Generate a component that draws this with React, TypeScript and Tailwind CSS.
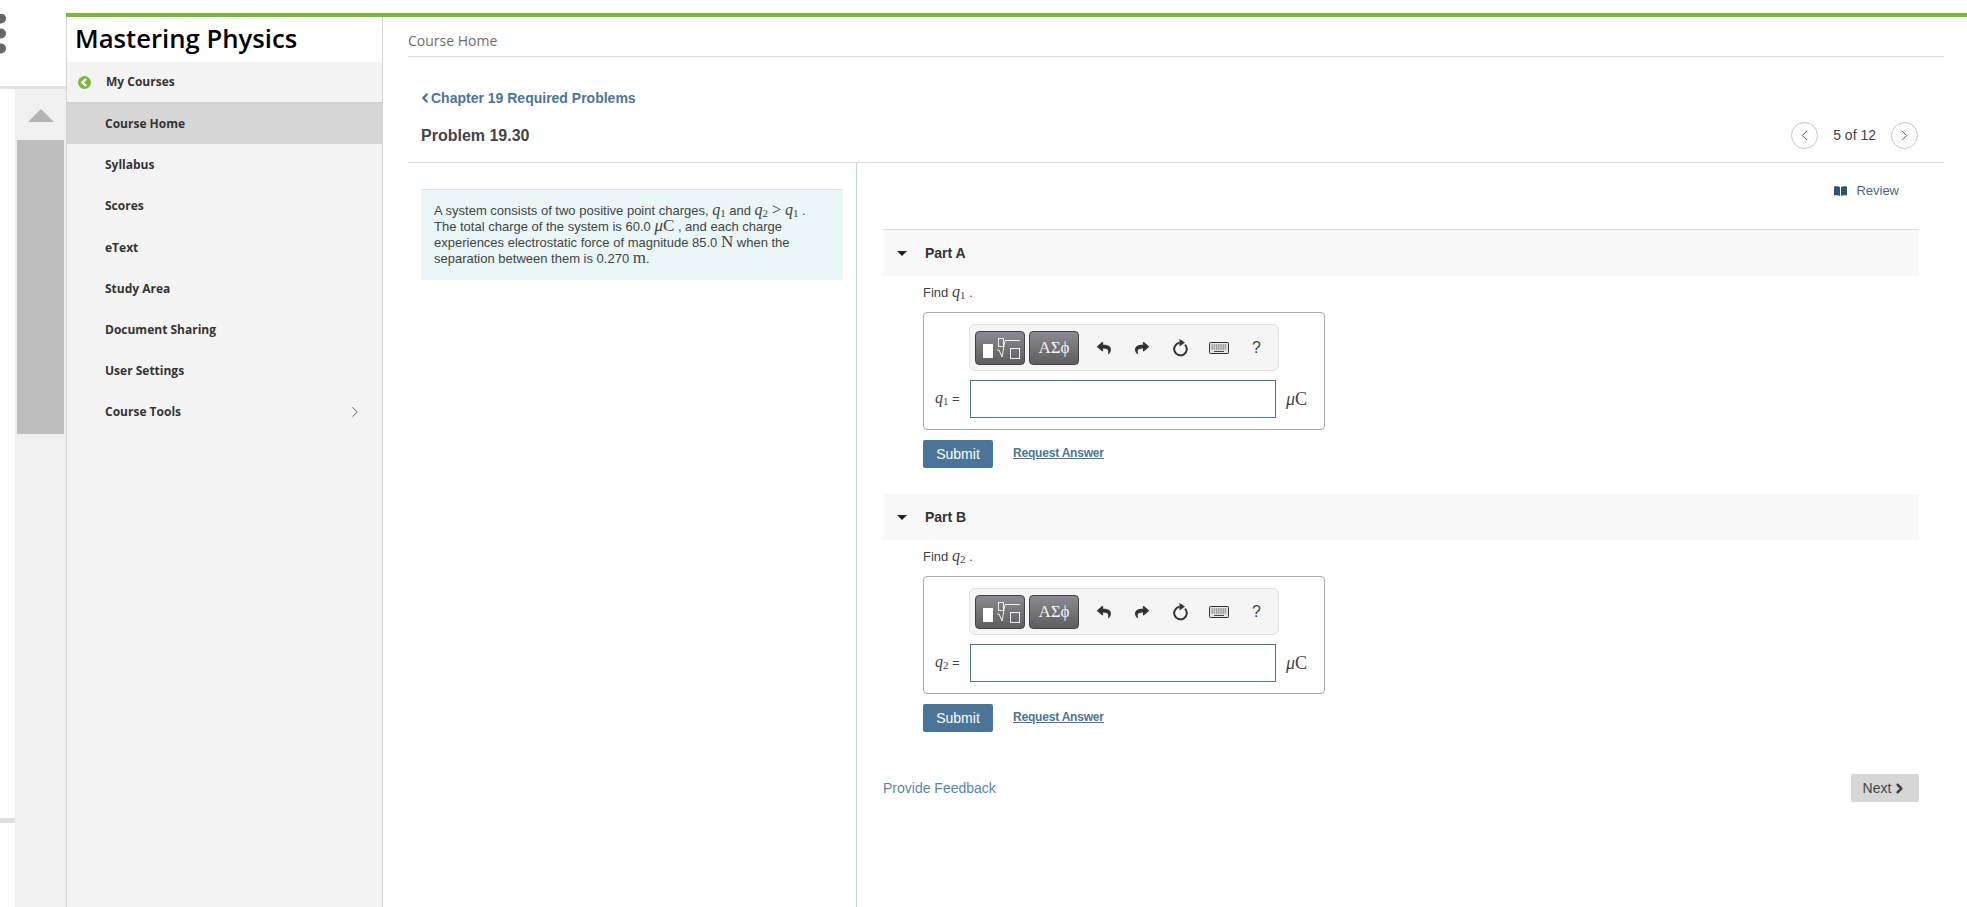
import React from 'react';
import { ChevronLeft, ChevronRight } from 'lucide-react';
import { FaReply, FaShare } from 'react-icons/fa';

const navItems = ['Course Home', 'Syllabus', 'Scores', 'eText', 'Study Area', 'Document Sharing', 'User Settings', 'Course Tools'];

function Sym({ n }: { n?: string }) {
  return (
    <span className="font-['Liberation_Serif',serif] italic text-[16px] leading-[0] font-medium">
      q{n && <sub className="not-italic text-[11px] leading-[0] -bottom-[2px]">{n}</sub>}
    </span>
  );
}

function Rm({ children }: { children: React.ReactNode }) {
  return <span className="font-['Liberation_Serif',serif] text-[17px] leading-[0]">{children}</span>;
}

function TemplateIcon() {
  return (
    <svg width="48" height="32" viewBox="0 0 48 32" fill="none">
      <rect x="7" y="12" width="10" height="14" fill="#fff" />
      <rect x="22.5" y="6.5" width="5" height="8" stroke="#e8e8e8" />
      <path d="M21 18h2l3 7L29 8.5h15" stroke="#eee" strokeWidth="1" />
      <rect x="34.5" y="16.5" width="9" height="10" stroke="#eee" />
    </svg>
  );
}

function ResetIcon() {
  return (
    <svg width="17" height="18" viewBox="0 0 17 18" fill="none">
      <path d="M13 5.6A6.3 6.3 0 1 1 7.5 3.8" stroke="#333" strokeWidth="2" />
      <path d="M7.5 0v7.5L13 3.5Z" fill="#333" />
    </svg>
  );
}

function KeyboardIcon() {
  return (
    <svg width="20" height="12" viewBox="0 0 20 12" fill="none">
      <rect x="0.5" y="0.5" width="19" height="11" rx="1" fill="#e6e6e6" stroke="#333" />
      <path d="M2.5 3h15M2.5 5h15M2.5 7h15" stroke="#555" strokeWidth="1" strokeDasharray="1.4 0.8" />
      <path d="M5 9.5h10" stroke="#444" />
    </svg>
  );
}

function Toolbar() {
  return (
    <div className="ml-[45px] flex h-[47px] w-[310px] items-center rounded-md border border-[#e2e2e2] bg-[#f5f5f5] pl-[5px]">
      <div className="flex h-[34px] w-[50px] items-center justify-center rounded border border-[#444] bg-gradient-to-b from-[#8b8b8f] to-[#5e5e60]">
        <TemplateIcon />
      </div>
      <div className="ml-[4px] flex h-[34px] w-[50px] items-center justify-center rounded border border-[#444] bg-gradient-to-b from-[#8b8b8f] to-[#5e5e60] font-['Liberation_Serif',serif] text-[17px] text-[#f2f2f2]">
        ΑΣϕ
      </div>
      <FaReply className="ml-[18px] text-[14px] text-[#333]" />
      <FaShare className="ml-[24px] text-[14px] text-[#333]" />
      <div className="ml-[23px]"><ResetIcon /></div>
      <div className="ml-[20px]"><KeyboardIcon /></div>
      <span className="ml-[23px] text-[16px] text-[#444]">?</span>
    </div>
  );
}

function Part({ label, n }: { label: string; n: string }) {
  return (
    <section>
      <div className="flex h-[46px] items-center bg-[#f8f8f8] pl-[14px]">
        <span className="h-0 w-0 border-x-[5px] border-t-[5px] border-x-transparent border-t-[#222]" />
        <span className="ml-[18px] text-[14px] font-bold text-[#333]">{label}</span>
      </div>
      <div className="pl-[40px]">
        <p className="h-[36px] pt-[8px] text-[13px] leading-[18px] text-[#444]">
          Find <Sym n={n} /> .
        </p>
        <div className="h-[118px] w-[402px] rounded border border-[#aaa] pt-[11px]">
          <Toolbar />
          <div className="mt-[9px] flex items-center">
            <span className="ml-[11px] w-[35px] text-[13px] text-[#444]">
              <Sym n={n} /> =
            </span>
            <div className="h-[38px] w-[306px] border border-[#4a7599] bg-white" />
            <span className="ml-[10px] font-['Liberation_Serif',serif] text-[18px] text-[#444]">
              <i>μ</i>C
            </span>
          </div>
        </div>
        <div className="mt-[10px] flex items-start">
          <button className="h-[28px] w-[70px] rounded-[2px] bg-[#4a7599] text-[14px] text-white">Submit</button>
          <a className="ml-[20px] mt-[4px] text-[12px] font-bold tracking-[-0.2px] text-[#4a7599] underline">Request Answer</a>
        </div>
      </div>
    </section>
  );
}

export default function App() {
  return (
    <div className="flex h-[907px] w-[1967px] overflow-hidden bg-white font-['Liberation_Sans',sans-serif]">
      {/* scroll rail */}
      <div className="flex w-[66px] shrink-0 flex-col">
        <div className="h-[86px] pt-[14px]">
          <svg width="7" height="40" viewBox="0 0 7 40" fill="#666">
            <circle cx="1" cy="4.5" r="5" />
            <circle cx="1" cy="19.5" r="5" />
            <circle cx="1" cy="34.5" r="5" />
          </svg>
        </div>
        <div className="h-[3px] bg-[#e2e2e5]" />
        <div className="flex flex-1">
          <div className="w-[15px] pt-[729px]">
            <div className="h-[5px] bg-[#dfdfdf]" />
          </div>
          <div className="flex-1 bg-[#f0f0f0] pl-[2px] pr-[2px] pt-[20px]">
            <div className="mx-auto h-0 w-0 border-x-[13px] border-b-[13px] border-x-transparent border-b-[#b4b4b4]" />
            <div className="mt-[18px] h-[294px] bg-[#bebebe]" />
          </div>
        </div>
      </div>

      <div className="flex min-w-0 flex-1 flex-col pt-[13px]">
        <div className="h-[4px] shrink-0 bg-[#7ab93c]" />
        <div className="flex min-h-0 flex-1">
          {/* sidebar */}
          <aside className="flex w-[317px] shrink-0 flex-col border-x border-[#d4d4d4] font-['Open_Sans',sans-serif]">
            <div className="h-[45px] bg-white pl-[8px] text-[25.7px] font-semibold leading-[44px] text-black">
              Mastering Physics
            </div>
            <nav className="flex-1 bg-[#f4f4f4] text-[12px] font-bold text-[#333]">
              <div className="flex h-[42px] items-center border-b-2 border-[#d0d0d0] pl-[11px]">
                <svg width="13" height="13" viewBox="0 0 13 13">
                  <circle cx="6.5" cy="6.5" r="6.5" fill="#7ab93c" />
                  <path d="M8 3 4.5 6.5 8 10" fill="none" stroke="#fff" strokeWidth="2.4" />
                </svg>
                <span className="ml-[15px]">My Courses</span>
              </div>
              {navItems.map((item, i) => (
                <div
                  key={item}
                  className={
                    i === 0
                      ? 'flex h-[40px] items-center bg-[#d6d6d6] pl-[38px]'
                      : i === 2
                        ? 'flex h-[42px] items-center pl-[38px]'
                        : 'flex h-[41px] items-center justify-between pl-[38px] pr-[18px]'
                  }
                >
                  {item}
                  {item === 'Course Tools' && <ChevronRight size={18} strokeWidth={1.2} className="text-[#555]" />}
                </div>
              ))}
            </nav>
          </aside>

          {/* main */}
          <main className="min-w-0 flex-1 pl-[25px] pr-[23px]">
            <div className="h-[40px] border-b border-[#e0e0e0] pt-[14px] font-['Open_Sans',sans-serif] text-[14px] leading-[20px] text-[#6d6d6d]">
              Course Home
            </div>
            <div className="h-[106px] border-b border-[#dcdcdc] pl-[13px] pr-[26px] pt-[32px]">
              <a className="flex items-center text-[14px] font-bold leading-[18px] text-[#4a7599]">
                <ChevronLeft size={14} strokeWidth={4} className="-ml-[3px] -mr-[1px]" />
                Chapter 19 Required Problems
              </a>
              <div className="mt-[15px] flex items-center justify-between">
                <h1 className="text-[16px] font-bold leading-[20px] text-[#444]">Problem 19.30</h1>
                <div className="flex items-center text-[14px] text-[#444]">
                  <span className="flex h-[27px] w-[27px] items-center justify-center rounded-full border border-[#c4c4c4]">
                    <ChevronLeft size={17} strokeWidth={1.4} className="text-[#555]" />
                  </span>
                  <span className="mx-[15px]">5 of 12</span>
                  <span className="flex h-[27px] w-[27px] items-center justify-center rounded-full border border-[#c4c4c4]">
                    <ChevronRight size={17} strokeWidth={1.4} className="text-[#555]" />
                  </span>
                </div>
              </div>
            </div>

            <div className="flex h-[745px]">
              <div className="w-[449px] shrink-0 border-r border-[#c5d0de] pl-[13px] pt-[26px]">
                <div className="h-[91px] w-[422px] border-t border-[#dde5e5] bg-[#eaf6f7] pl-[13px] pt-[13px] text-[13px] leading-[16px] text-[#444]">
                  <p className="whitespace-nowrap">
                    A system consists of two positive point charges, <Sym n="1" /> and <Sym n="2" />{' '}
                    <Rm>&gt;</Rm> <Sym n="1" /> .
                    <br />
                    The total charge of the system is 60.0 <Rm><i>μ</i>C</Rm> , and each charge
                    <br />
                    experiences electrostatic force of magnitude 85.0 <Rm>N</Rm> when the
                    <br />
                    separation between them is 0.270 <Rm>m</Rm>.
                  </p>
                </div>
              </div>
              <div className="min-w-0 flex-1 pl-[26px] pr-[25px]">
                <div className="flex h-[66px] items-start justify-end pr-[20px] pt-[20px] text-[13px] leading-[16px] text-[#4a6a85]">
                  <svg width="13" height="10" viewBox="0 0 13 10" fill="#2f5573" className="mt-[3px]">
                    <path d="M0 0.5C2 0 4.5 0 6 1V10C4.5 9 2 9 0 9.5ZM7 1C8.5 0 11 0 13 0.5V9.5C11 9 8.5 9 7 10Z" />
                  </svg>
                  <span className="ml-[9px]">Review</span>
                </div>
                <div className="border-t border-[#dcdcdc]">
                  <Part label="Part A" n="1" />
                </div>
                <div className="mt-[26px]">
                  <Part label="Part B" n="2" />
                </div>
                <div className="mt-[42px] flex items-center justify-between">
                  <a className="text-[14px] text-[#5c84a6]">Provide Feedback</a>
                  <button className="flex h-[28px] w-[68px] items-center justify-center rounded-[2px] bg-[#d6d6d6] text-[14px] text-[#444]">
                    Next
                    <ChevronRight size={15} strokeWidth={4} className="ml-[1px]" />
                  </button>
                </div>
              </div>
            </div>
          </main>
        </div>
      </div>
    </div>
  );
}
